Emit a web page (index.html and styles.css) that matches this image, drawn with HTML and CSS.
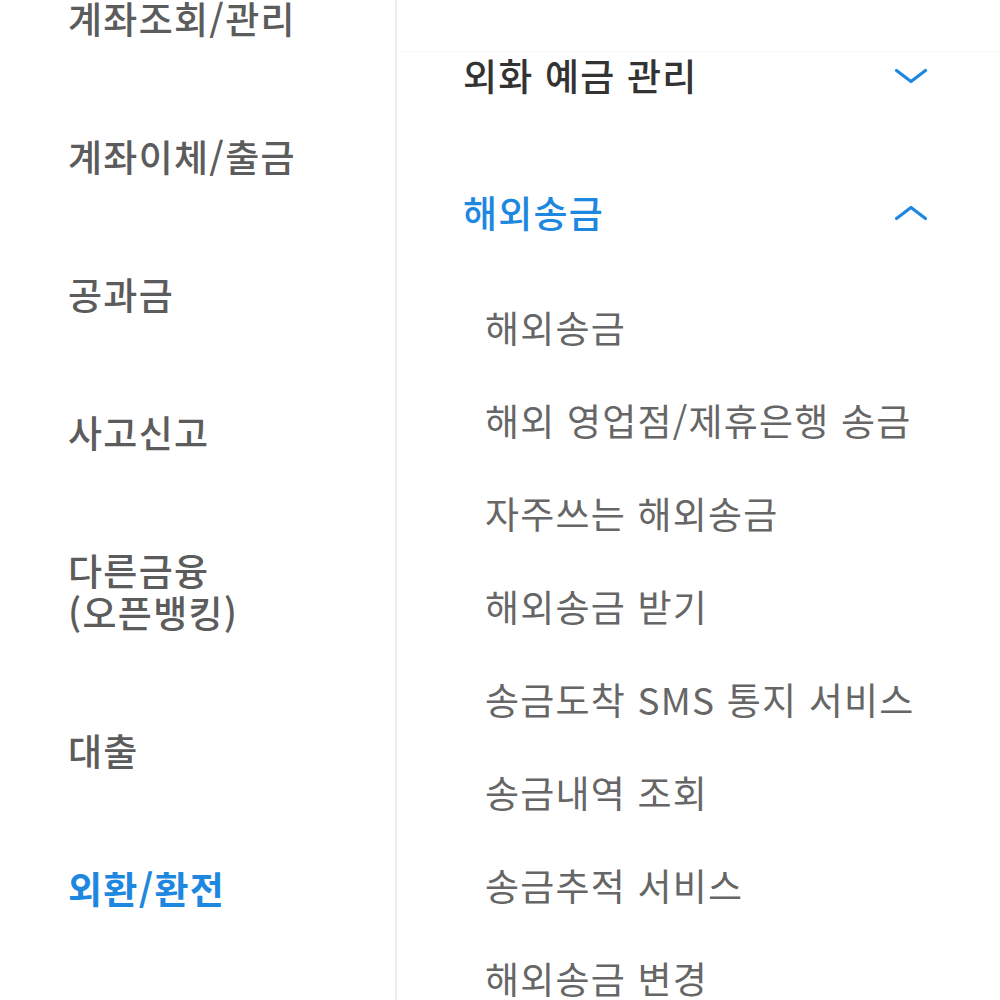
FILE: index.html
```html
<!DOCTYPE html>
<html lang="ko">
<head>
<meta charset="utf-8">
<title>외환/환전 메뉴</title>
<link rel="stylesheet" href="styles.css">
</head>
<body>
<div class="app">
  <nav class="side">
    <ul class="side-list">
      <li class="side-item">계좌조회/관리</li>
      <li class="side-item">계좌이체/출금</li>
      <li class="side-item">공과금</li>
      <li class="side-item">사고신고</li>
      <li class="side-item">다른금융<br>(오픈뱅킹)</li>
      <li class="side-item">대출</li>
      <li class="side-item active">외환/환전</li>
    </ul>
  </nav>
  <main class="panel">
    <div class="group">
      <div class="group-head">
        <span class="group-title">외화 예금 관리</span>
        <svg class="chev" viewBox="0 0 34 16" width="34" height="16"><polyline points="2.5,2.5 17,13.5 31.5,2.5"/></svg>
      </div>
    </div>
    <div class="group open">
      <div class="group-head">
        <span class="group-title">해외송금</span>
        <svg class="chev" viewBox="0 0 34 16" width="34" height="16"><polyline points="2.5,13.5 17,2.5 31.5,13.5"/></svg>
      </div>
      <ul class="sub-list">
        <li class="sub-item">해외송금</li>
        <li class="sub-item">해외 영업점/제휴은행 송금</li>
        <li class="sub-item">자주쓰는 해외송금</li>
        <li class="sub-item">해외송금 받기</li>
        <li class="sub-item">송금도착 SMS 통지 서비스</li>
        <li class="sub-item">송금내역 조회</li>
        <li class="sub-item">송금추적 서비스</li>
        <li class="sub-item">해외송금 변경</li>
      </ul>
    </div>
  </main>
</div>
</body>
</html>
```
FILE: styles.css
```css
html, body {
  margin: 0;
  padding: 0;
  background: #ffffff;
  height: 1000px;
  overflow: hidden;
}
body {
  font-family: "Noto Sans CJK KR", "Noto Sans", sans-serif;
}
ul {
  list-style: none;
  margin: 0;
  padding: 0;
}
.app {
  display: flex;
  height: 1000px;
}
.side {
  width: 395px;
  flex: 0 0 395px;
  border-right: 2px solid #ededed;
  overflow: hidden;
}
.side-list {
  margin-top: -51px;
}
.side-item {
  padding: 48px 0 48px 68px;
  font-size: 37px;
  line-height: 42px;
  font-weight: 500;
  color: #5c5c5c;
  letter-spacing: 1.3px;
}
.side-item.active {
  color: #1e88e0;
  font-weight: 700;
}
.panel {
  flex: 1;
  padding-top: 6px;
  overflow: hidden;
}
.panel::before {
  content: "";
  display: block;
  height: 1px;
  margin-top: 45px;
  margin-bottom: -46px;
  background: #f8f8f8;
}
.group-head {
  display: flex;
  align-items: center;
  justify-content: space-between;
  height: 137px;
  padding: 0 72px 0 66px;
}
.group-title {
  font-size: 37px;
  line-height: 42px;
  font-weight: 500;
  color: #333333;
  letter-spacing: 1.2px;
}
.group-title-gap {
  word-spacing: -2px;
}
.group.open .group-title {
  color: #1e88e0;
}
.chev {
  display: block;
  margin-top: 3px;
}
.chev polyline {
  fill: none;
  stroke: #1e88e0;
  stroke-width: 3.2;
  stroke-linecap: round;
  stroke-linejoin: round;
}
.sub-item {
  height: 93px;
  display: flex;
  align-items: center;
  padding-left: 88px;
  font-size: 37px;
  line-height: 42px;
  font-weight: 400;
  color: #666666;
  letter-spacing: 1.2px;
}
```
